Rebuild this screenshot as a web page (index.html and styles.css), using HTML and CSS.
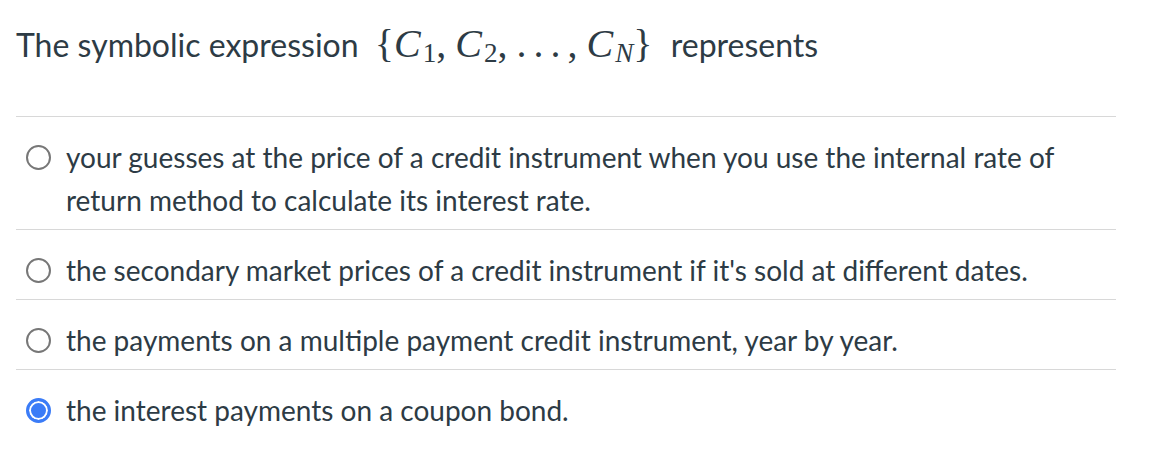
FILE: index.html
```html
<!DOCTYPE html>
<html>
<head>
<meta charset="utf-8">
<link rel="stylesheet" href="styles.css">
</head>
<body>
<div class="question">
  <div class="prompt">The symbolic expression <span class="math"><span class="brace">{</span><i>C</i><sub>1</sub><span class="comma">,</span><i>C</i><sub>2</sub><span class="comma">,</span><span class="dots">...</span><span class="comma">,</span><i>C</i><sub><i>N</i></sub><span class="brace">}</span></span> represents</div>
  <div class="answers">
    <label class="answer"><span class="radio"></span><span class="text">your guesses at the price of a credit instrument when you use the internal rate of return method to calculate its interest rate.</span></label>
    <label class="answer"><span class="radio"></span><span class="text">the secondary market prices of a credit instrument if it's sold at different dates.</span></label>
    <label class="answer"><span class="radio"></span><span class="text">the payments on a multiple payment credit instrument, year by year.</span></label>
    <label class="answer"><span class="radio checked"></span><span class="text">the interest payments on a coupon bond.</span></label>
  </div>
</div>
</body>
</html>
```
FILE: styles.css
```css
html, body {
  margin: 0;
  padding: 0;
  background: #ffffff;
}
body {
  font-family: Lato, "Liberation Sans", sans-serif;
  color: #2d3b45;
}
.question {
  width: 1100px;
  padding: 0 0 0 16px;
}
.prompt {
  font-size: 32px;
  line-height: 40px;
  height: 40px;
  padding-top: 25px;
  padding-bottom: 51px;
  border-bottom: 1px solid #d8d8d8;
}
.math {
  font-family: "Liberation Serif", "DejaVu Serif", serif;
  font-size: 40px;
  line-height: 0;
  margin: 0 10px 0 8px;
  color: #2d3b45;
}
.math i {
  font-style: italic;
}
.math sub {
  font-size: 0.68em;
  vertical-align: -0.2em;
  line-height: 0;
  margin-left: 2px;
}
.math sub i { font-size: 1em; }
.comma { margin-right: 9px; }
.dots { letter-spacing: 7px; }
.answer {
  display: flex;
  align-items: flex-start;
  padding: 19px 0 7px 0;
  border-bottom: 1px solid #d8d8d8;
  font-size: 28px;
  line-height: 43px;
}
.answer:last-child { border-bottom: none; }
.radio {
  flex: none;
  box-sizing: border-box;
  width: 25px;
  height: 25px;
  border: 2px solid #777777;
  border-radius: 50%;
  margin: 9px 15px 0 10px;
  background: #fff;
}
.radio.checked {
  border: 3px solid #3b7cf7;
  box-shadow: inset 0 0 0 2px #ffffff;
  background: #3b7cf7;
}
.text { flex: 1; }
```
